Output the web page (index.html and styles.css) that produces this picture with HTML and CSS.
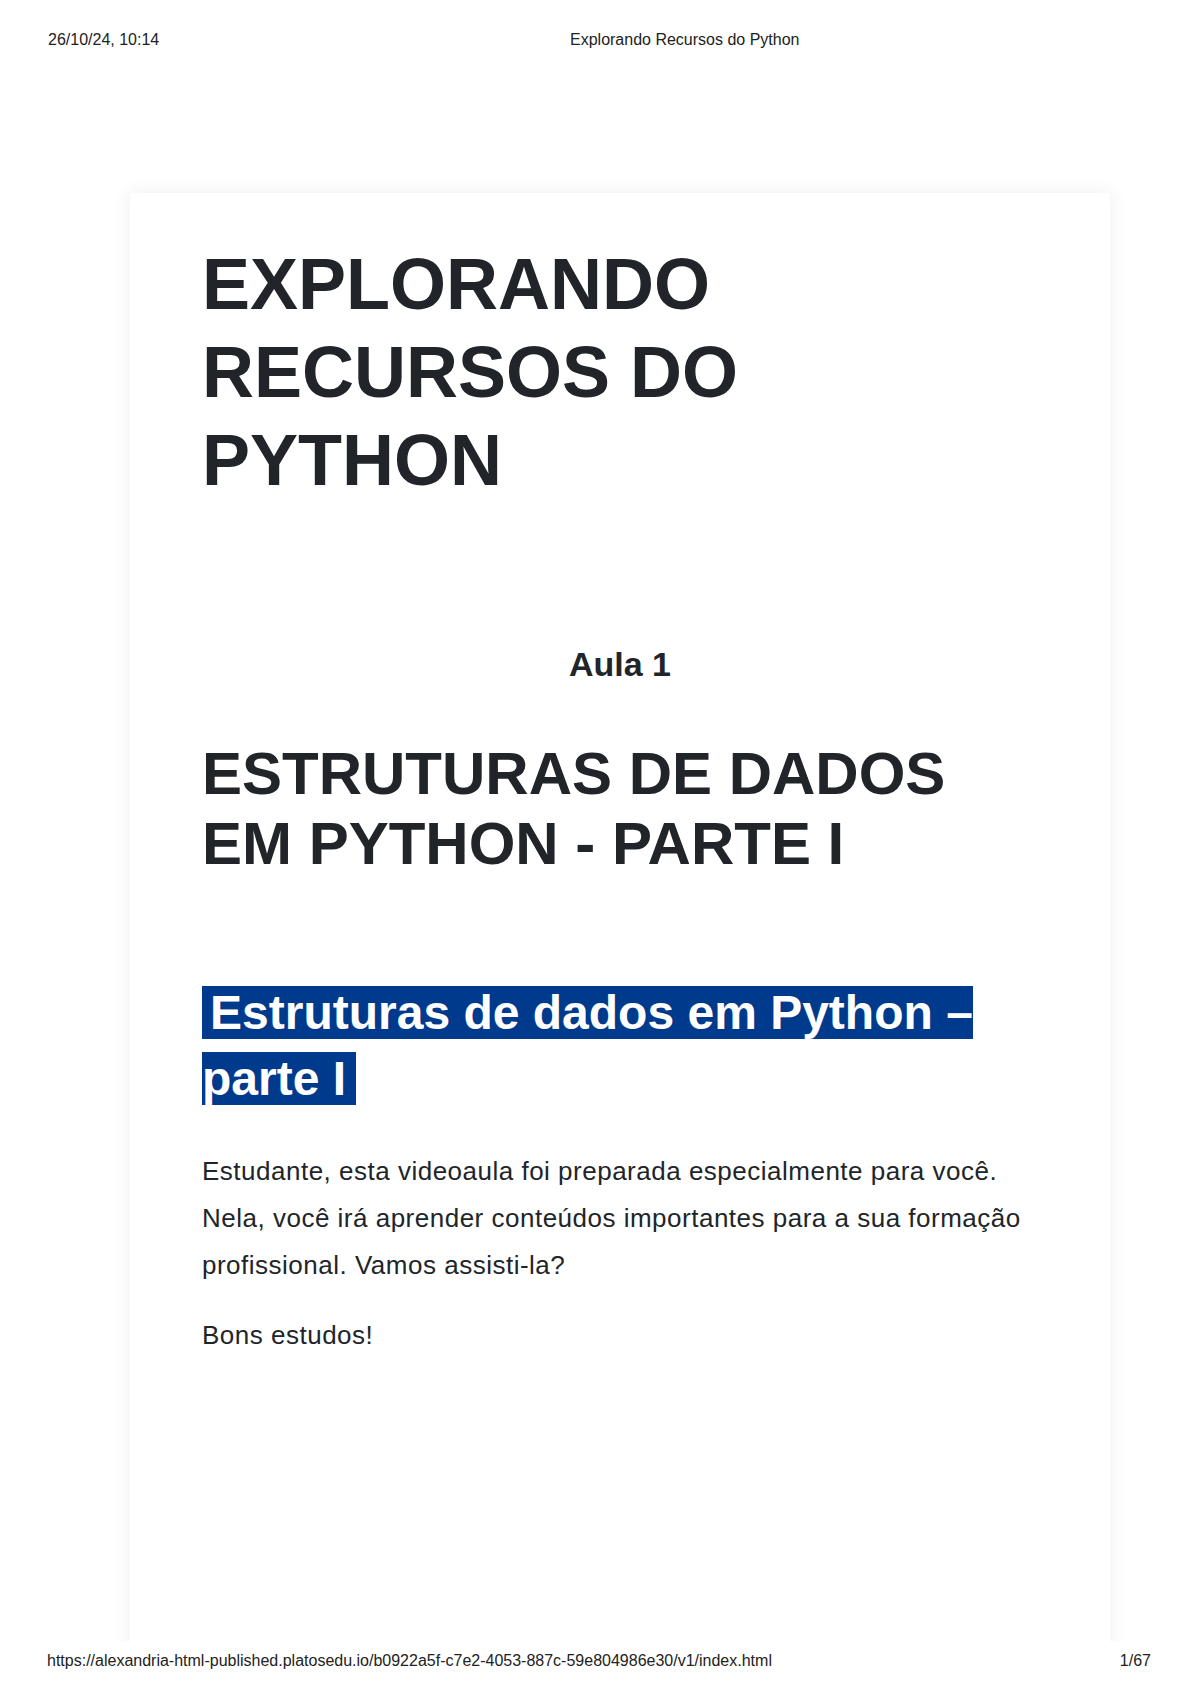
FILE: index.html
```html
<!DOCTYPE html>
<html lang="pt-BR">
<head>
  <meta charset="UTF-8">
  <meta name="viewport" content="width=device-width, initial-scale=1.0">
  <title>Explorando Recursos do Python</title>
  <link rel="stylesheet" href="styles.css">
</head>
<body>

<!-- Print header -->
<div class="print-header">
  <span class="print-date">26/10/24, 10:14</span>
  <span class="print-title">Explorando Recursos do Python</span>
</div>

<!-- Page area (cut at the page break) -->
<div class="sheet">
  <div class="card">
    <h1 class="course-title">EXPLORANDO RECURSOS DO PYTHON</h1>

    <div class="lesson-label">Aula 1</div>

    <h2 class="lesson-title">ESTRUTURAS DE DADOS EM PYTHON - PARTE I</h2>

    <h3 class="topic-title"><span class="highlight">Estruturas de dados em Python – parte I</span></h3>

    <p class="text">Estudante, esta videoaula foi preparada especialmente para você. Nela, você irá aprender conteúdos importantes para a sua formação profissional. Vamos assisti-la?</p>
    <p class="text">Bons estudos!</p>
  </div>
</div>

<!-- Print footer -->
<div class="print-footer">
  <span>https://alexandria-html-published.platosedu.io/b0922a5f-c7e2-4053-887c-59e804986e30/v1/index.html</span>
  <span>1/67</span>
</div>

</body>
</html>
```

FILE: styles.css
```css
body {
    margin: 0;
    height: 1698px;
    overflow: hidden;
    background-color: #fff;
    font-family: "Liberation Sans", Arial, sans-serif;
    color: #212529;
}
.print-header {
    display: flex;
    padding: 30px 48px 0 48px;
    height: 20px;
    font-size: 16px;
    line-height: 20px;
    color: #222;
}
.print-date {
    flex: 0 0 522px;
}
.sheet {
    height: 1591px;
    overflow: hidden;
}
.card {
    margin: 143px 0 0 130px;
    width: 980px;
    min-height: 1700px;
    box-sizing: border-box;
    padding: 47px 72px;
    background-color: #fff;
    box-shadow: 0 0 18px rgba(0, 0, 0, 0.07);
}
.course-title {
    margin: 0;
    font-size: 72px;
    line-height: 88px;
    font-weight: bold;
}
.lesson-label {
    margin-top: 140px;
    text-align: center;
    font-size: 34px;
    line-height: 41px;
    font-weight: bold;
}
.lesson-title {
    margin: 54px 0 0 0;
    font-size: 60px;
    line-height: 70px;
    font-weight: bold;
}
.topic-title {
    margin: 101px 0 0 0;
    font-size: 48px;
    line-height: 66px;
    font-weight: bold;
}
.highlight {
    padding: 0 10px 0 8px;
    background-color: #003a8c;
    color: #fff;
}
.text {
    margin: 36px 0 0 0;
    font-size: 26px;
    line-height: 47px;
    letter-spacing: 0.5px;
}
.text + .text {
    margin-top: 23px;
}
.print-footer {
    display: flex;
    justify-content: space-between;
    padding: 10px 49px 0 47px;
    font-size: 16px;
    line-height: 20px;
    color: #222;
}
```
